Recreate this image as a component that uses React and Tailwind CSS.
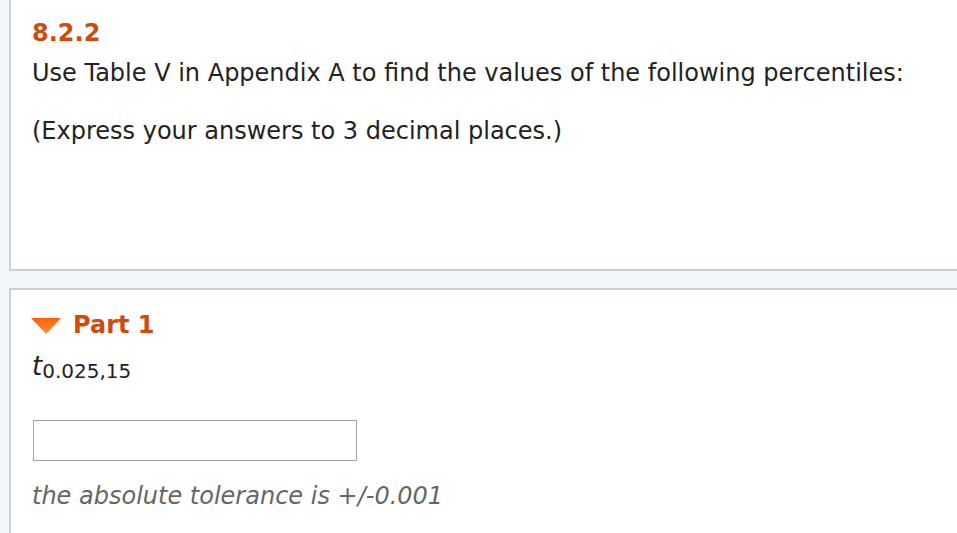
const FONT = { fontFamily: '"DejaVu Sans", Verdana, sans-serif' }

function Triangle() {
  return (
    <svg width="30" height="17" viewBox="0 0 30 17" className="shrink-0">
      <defs>
        <linearGradient id="tri" x1="0" y1="0" x2="0" y2="1">
          <stop offset="0" stopColor="#ff5f00" />
          <stop offset="1" stopColor="#ff9147" />
        </linearGradient>
      </defs>
      <polygon points="0,1 30,1 15,17" fill="url(#tri)" />
    </svg>
  )
}

export default function App() {
  return (
    <div className="w-[957px] h-[533px] overflow-hidden bg-[#f4f7fa] pl-[9px]" style={FONT}>
      <div className="w-[960px] h-[271px] bg-white border-l-2 border-b-2 border-[#c8d0dd] pl-[21px] pt-[19px]">
        <div className="text-[24px] leading-[28px] font-bold text-[#d24a0a]">8.2.2</div>
        <p className="mt-[12px] text-[24px] leading-[28px] text-[#222]">
          Use Table V in Appendix A to find the values of the following percentiles:
        </p>
        <p className="mt-[30px] text-[24px] leading-[28px] text-[#222]">
          (Express your answers to 3 decimal places.)
        </p>
      </div>
      <div className="mt-[17px] w-[960px] h-[300px] bg-white border-l-2 border-t-2 border-[#c8d0dd] pl-[20px] pt-[21px]">
        <div className="flex items-center gap-[12px]">
          <Triangle />
          <span className="text-[24px] leading-[28px] font-bold text-[#d24a0a]">Part 1</span>
        </div>
        <div className="mt-[13px] text-[#222] flex items-baseline pl-[1px]">
          <span className="italic text-[26px] leading-[28px]">t</span>
          <span className="text-[20px] leading-[28px] relative top-[3px]">0.025,15</span>
        </div>
        <input
          type="text"
          className="mt-[38px] ml-[2px] block w-[324px] h-[41px] border border-[#a3a3a3] bg-white outline-none"
        />
        <p className="mt-[21px] ml-[1px] italic text-[24px] leading-[28px] text-[#666]">
          the absolute tolerance is +/-0.001
        </p>
      </div>
    </div>
  )
}
